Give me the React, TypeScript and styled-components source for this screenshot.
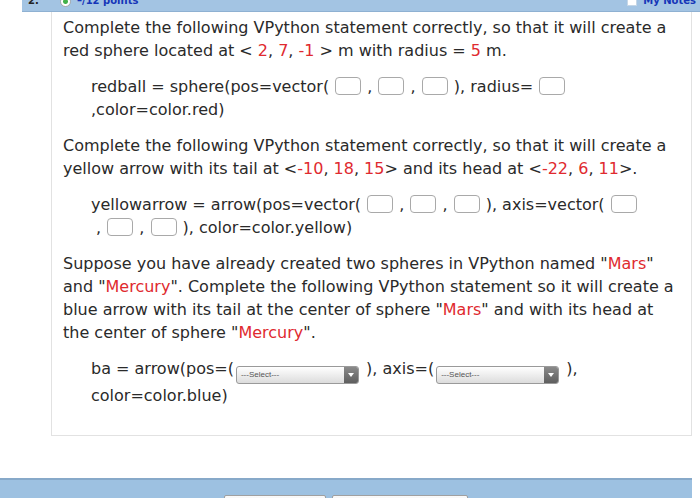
import styled, { createGlobalStyle } from 'styled-components';

let GlobalStyle = createGlobalStyle`
  html, body {
    margin: 0;
    padding: 0;
    background: #fff;
  }
  body {
    width: 700px;
    height: 498px;
    overflow: hidden;
    font-family: 'DejaVu Sans', Verdana, sans-serif;
  }
`;

let Page = styled.div`
  display: flex;
  flex-direction: column;
  height: 498px;
`;

let QuestionHeader = styled.div`
  margin-left: 22px;
  height: 11px;
  background: #a3c4e3;
  border-bottom: 1px solid #8fb1d2;
  display: flex;
  align-items: flex-end;
  justify-content: space-between;
  overflow: hidden;
  font-size: 10px;
  font-weight: bold;
  line-height: 10px;
  padding: 0 4px 0 6px;
`;

let HeaderLeft = styled.div`
  display: flex;
  align-items: flex-end;
  gap: 6px;
  margin-bottom: 5px;
`;

let Number = styled.span`
  color: #222;
  width: 26px;
`;

let StatusDot = styled.span`
  width: 9px;
  height: 9px;
  border-radius: 50%;
  background: radial-gradient(circle, #43b04a 0 2px, #fff 3px);
  border: 1px solid #aaa;
  margin-bottom: -1px;
`;

let Points = styled.span`
  color: #1535b8;
`;

let Notes = styled.div`
  display: flex;
  align-items: flex-end;
  gap: 6px;
  margin-bottom: 5px;
  color: #1535b8;
`;

let NotesBox = styled.span`
  width: 8px;
  height: 12px;
  background: #fff;
  border: 1px solid #c5d6e6;
`;

let Card = styled.div`
  box-sizing: border-box;
  margin: 0 8px 0 51px;
  height: 424px;
  border: 1px solid #e2e2e2;
  border-top: none;
  background: #fff;
  padding: 4px 14px 0 11px;
  font-size: 16px;
  line-height: 23px;
  color: #2a2a2a;
`;

let Para = styled.p`
  margin: 0 0 13px;
`;

let Code = styled.div`
  margin: 0 0 13px 28px;
`;

let Red = styled.span`
  color: #e02a2f;
`;

let Blank = styled.span`
  display: inline-block;
  width: 24px;
  height: 16px;
  border: 1px solid #a9a9a9;
  border-radius: 4px;
  background: #fff;
  vertical-align: -3px;
  margin: 0 1px;
`;

let Select = styled.span`
  display: inline-flex;
  width: 121px;
  height: 16px;
  border: 1px solid #9a9a9a;
  border-radius: 3px;
  background: linear-gradient(#ffffff, #dcdcdc);
  vertical-align: -3px;
  margin: 0 2px;
  overflow: hidden;
`;

let SelectText = styled.span`
  flex: 1;
  font-family: 'Liberation Sans', Arial, sans-serif;
  font-size: 8px;
  line-height: 16px;
  color: #555;
  padding-left: 4px;
`;

let SelectArrow = styled.span`
  width: 14px;
  background: linear-gradient(#8a8a8a, #5e5e5e);
  display: flex;
  align-items: center;
  justify-content: center;
  &::after {
    content: '';
    border-left: 3px solid transparent;
    border-right: 3px solid transparent;
    border-top: 4px solid #fff;
  }
`;

let Spacer = styled.div`
  flex: 1;
`;

let Footer = styled.div`
  height: 20px;
  margin-right: 8px;
  background: #9dc1e1;
  border-top: 2px solid #87a9c9;
  display: flex;
  justify-content: center;
  gap: 6px;
  padding: 15px 0 0 0;
  box-sizing: border-box;
  overflow: hidden;
`;

let FooterButton = styled.span<{ $width: number }>`
  width: ${p => p.$width}px;
  height: 18px;
  background: linear-gradient(#fafafa, #e6e6e6);
  border: 1px solid #a0a0a0;
  border-radius: 2px;
  font-family: 'Liberation Sans', Arial, sans-serif;
  font-size: 9px;
  line-height: 16px;
  text-align: center;
  color: #333;
`;

let SelectBox = () => (
  <Select>
    <SelectText>---Select---</SelectText>
    <SelectArrow />
  </Select>
);

export default function App() {
  return (
    <Page>
      <GlobalStyle />
      <QuestionHeader>
        <HeaderLeft>
          <Number>2.</Number>
          <StatusDot />
          <Points>–/12 points</Points>
        </HeaderLeft>
        <Notes>
          <NotesBox />
          My Notes
        </Notes>
      </QuestionHeader>
      <Card>
        <Para>
          Complete the following VPython statement correctly, so that it will create a red sphere
          located at &lt; <Red>2</Red>, <Red>7</Red>, <Red>-1</Red> &gt; m with radius ={' '}
          <Red>5</Red> m.
        </Para>
        <Code>
          redball = sphere(pos=vector( <Blank /> , <Blank /> , <Blank /> ), radius= <Blank />
          <br />
          ,color=color.red)
        </Code>
        <Para>
          Complete the following VPython statement correctly, so that it will create a yellow arrow
          with its tail at &lt;<Red>-10</Red>, <Red>18</Red>, <Red>15</Red>&gt; and its head at
          &lt;<Red>-22</Red>, <Red>6</Red>, <Red>11</Red>&gt;.
        </Para>
        <Code>
          yellowarrow = arrow(pos=vector( <Blank /> , <Blank /> , <Blank /> ), axis=vector({' '}
          <Blank />
          <br />
          &nbsp;, <Blank /> , <Blank /> ), color=color.yellow)
        </Code>
        <Para>
          Suppose you have already created two spheres in VPython named "<Red>Mars</Red>" and "
          <Red>Mercury</Red>". Complete the following VPython statement so it will create a blue
          arrow with its tail at the center of sphere "<Red>Mars</Red>" and with its head at the
          center of sphere "<Red>Mercury</Red>".
        </Para>
        <Code>
          ba = arrow(pos=(
          <SelectBox /> ), axis=(
          <SelectBox /> ),
          <br />
          color=color.blue)
        </Code>
      </Card>
      <Spacer />
      <Footer>
        <FooterButton $width={100}>Submit Assignment</FooterButton>
        <FooterButton $width={134}>Save Assignment Progress</FooterButton>
      </Footer>
    </Page>
  );
}
